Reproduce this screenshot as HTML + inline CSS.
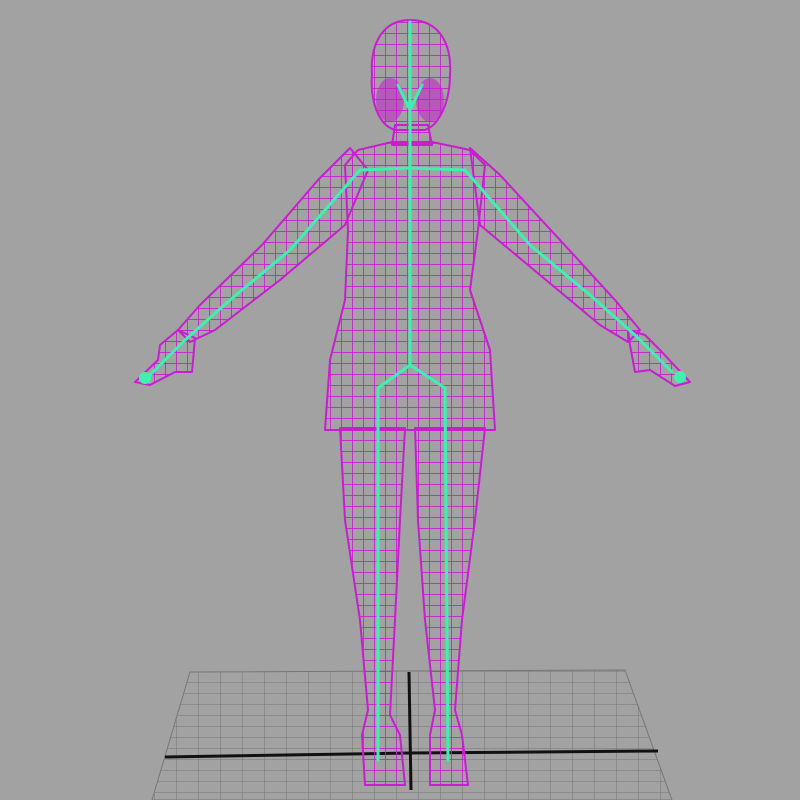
<!DOCTYPE html>
<html><head><meta charset="utf-8"><style>html,body{margin:0;padding:0;background:#a2a2a2;}svg{display:block}</style></head>
<body>
<svg width="800" height="800" viewBox="0 0 800 800" xmlns="http://www.w3.org/2000/svg">
<defs>
<pattern id="mesh" width="11" height="11" patternUnits="userSpaceOnUse">
<path d="M0 0H11M0 0V11" stroke="#c81ed0" stroke-width="1.7" fill="none"/>
</pattern>
<pattern id="grid" width="22" height="11" patternUnits="userSpaceOnUse">
<path d="M0 0H22M0 0V11" stroke="#767676" stroke-width="1" fill="none"/>
</pattern>
</defs>
<rect width="800" height="800" fill="#a2a2a2"/>
<polygon points="190,672 625,670 672,800 152,800" fill="url(#grid)" stroke="#767676"/>
<path d="M165,757 L410,753 L658,751" stroke="#111" stroke-width="3" fill="none"/>
<path d="M409,672 L411,790" stroke="#111" stroke-width="3" fill="none"/>
<g fill="url(#mesh)" stroke="#c81ed0" stroke-width="2" stroke-linejoin="round">
<path d="M410,20 C440,20 452,45 450,75 C450,100 440,125 425,130 L395,130 C378,125 370,100 372,75 C370,45 382,20 410,20Z"/>
<path d="M395,125 L428,125 L432,145 L392,145Z"/>
<path d="M392,142 L432,142 L470,150 L485,165 L478,230 L470,290 L490,350 L495,430 L325,430 L330,360 L345,300 L348,230 L345,165 L358,150Z"/>
<path d="M350,148 L368,170 L345,225 L280,280 L215,330 L190,342 L178,330 L200,305 L262,245 L318,180Z"/>
<path d="M178,330 L195,338 L192,372 L175,372 L150,385 L135,382 L158,360 L160,345Z"/>
<path d="M470,148 L500,175 L560,240 L615,300 L640,330 L628,342 L600,325 L540,275 L480,225Z"/>
<path d="M628,330 L645,335 L660,350 L690,382 L675,386 L650,370 L635,372 L630,345Z"/>
<path d="M340,428 L405,428 L400,520 L395,620 L390,715 L400,735 L405,785 L365,785 L362,735 L368,710 L360,620 L345,520Z"/>
<path d="M415,428 L485,428 L475,520 L462,620 L455,710 L462,735 L468,785 L430,785 L430,735 L435,710 L425,620 L418,520Z"/>
</g>
<g fill="#c81ed0" opacity="0.55">
<ellipse cx="390" cy="100" rx="14" ry="22"/><ellipse cx="430" cy="100" rx="14" ry="22"/>
</g>
<g stroke="#3ff0b0" stroke-width="3" fill="none" stroke-linecap="round" stroke-linejoin="round">
<path d="M410,22 L410,365"/>
<path d="M398,85 L410,110 L422,85"/>
<path d="M360,170 L410,168 L465,170"/>
<path d="M360,170 L290,250 L230,300 L185,340 L150,375"/>
<path d="M465,170 L530,245 L590,295 L635,335 L672,372"/>
<path d="M410,365 L378,388 L378,760"/>
<path d="M410,365 L445,388 L448,760"/>
</g>
<g fill="#3ff0b0">
<circle cx="145" cy="378" r="6"/><circle cx="680" cy="377" r="6"/>
</g>
</svg>
</body></html>
